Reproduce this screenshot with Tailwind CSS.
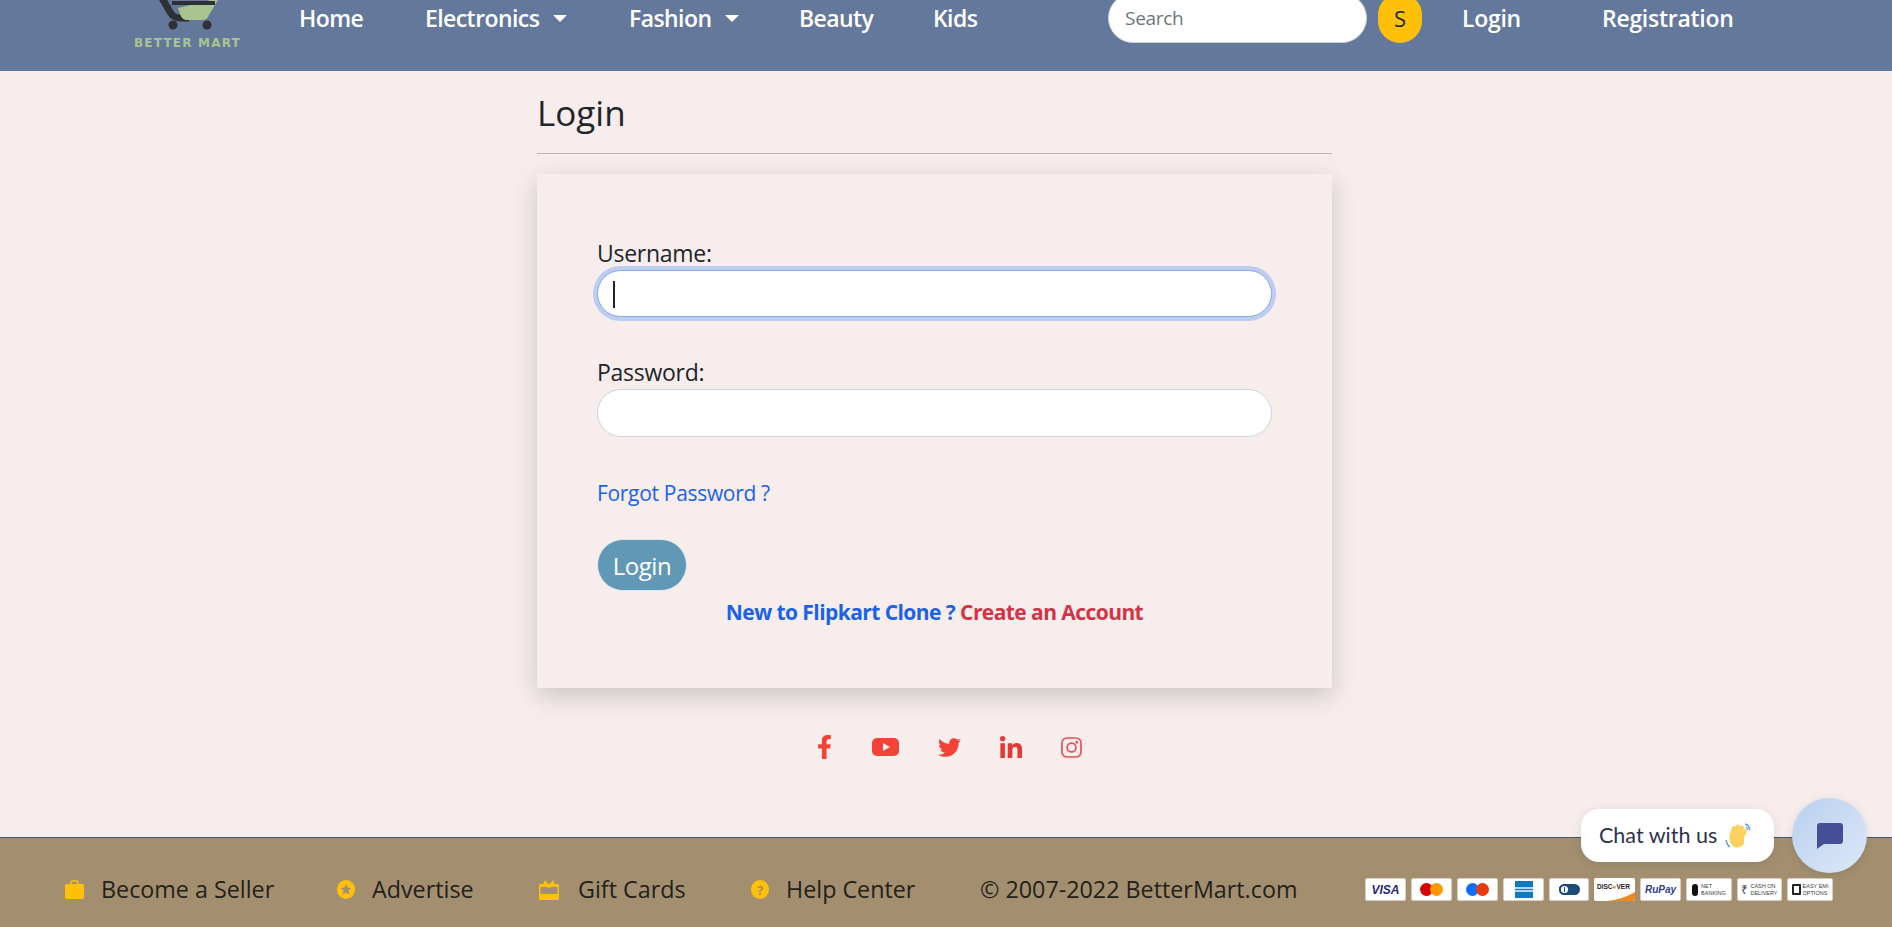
<!DOCTYPE html>
<html lang="en">
  <head>
    <meta charset="UTF-8" />
    <meta name="viewport" content="width=device-width, initial-scale=1.0" />
    <script src="https://cdn.jsdelivr.net/npm/@tailwindcss/browser@4"></script>
    <title>Login</title>
  </head>
  <body class="relative h-[927px] overflow-hidden bg-[#f7eded] font-['Open_Sans',sans-serif] text-[#212529]">
    <!-- page is scrolled a little, so the nav starts above the window -->
    <nav class="-mt-[12px] h-[83px] bg-[#64789b] text-white">
      <div class="flex h-[60px] items-center">
        <div class="ml-[134px] flex w-[165px] flex-col self-start pt-[12px]">
          <svg class="ml-[25px] h-[32px] w-[60px]" viewBox="0 0 60 32">
            <path d="M3 -2 L11 12 Q14 18 21 18 L30 18" fill="none" stroke="#2f3035" stroke-width="7" />
            <path d="M19 8 L60 -2 L50 15 Q48 20 44 20 L28 20 Q23 20 21 14 Z" fill="#a9c48f" />
            <path d="M13 3 L56 3" stroke="#2f3035" stroke-width="4" />
            <circle cx="14" cy="25" r="4.5" fill="#2f3035" />
            <circle cx="48" cy="25" r="4.5" fill="#2f3035" />
          </svg>
          <span class="mt-[4px] font-['DejaVu_Sans',sans-serif] text-[12px] leading-[14px] font-bold tracking-[0.1em] whitespace-nowrap text-[#a9c48f]">BETTER MART</span>
        </div>
        <div class="flex items-center text-[23px] font-semibold tracking-[-0.025em]">
          <a class="w-[126px]">Home</a>
          <a class="flex w-[204px] items-center">Electronics<span class="ml-[14px] border-x-[7px] border-t-[7px] border-x-transparent border-t-white"></span></a>
          <a class="flex w-[170px] items-center">Fashion<span class="ml-[14px] border-x-[7px] border-t-[7px] border-x-transparent border-t-white"></span></a>
          <a class="w-[134px]">Beauty</a>
          <a class="w-[175px]">Kids</a>
        </div>
        <div class="flex items-center">
          <input placeholder="Search" class="h-[50px] w-[259px] rounded-[25px] border border-[#ced4da] bg-white px-[16px] text-[19px] tracking-[-0.015em] placeholder:text-[#6c757d]" />
          <button class="ml-[11px] h-[50px] w-[44px] rounded-[22px] bg-[#ffc107] text-[22px] text-[#212529]">S</button>
        </div>
        <a class="ml-[40px] w-[140px] text-[23px] font-semibold tracking-[-0.012em]">Login</a>
        <a class="text-[23px] font-semibold tracking-[-0.012em]">Registration</a>
      </div>
    </nav>

    <main class="ml-[537px] w-[795px]">
      <h1 class="flex h-[83px] items-center border-b border-[#bdb4b4] pt-[3px] text-[35px] font-medium">Login</h1>

      <form class="mt-[20px] flex h-[514px] flex-col bg-[#f7eded] px-[60px] pt-[64px] shadow-[0_8px_24px_rgba(0,0,0,0.18)]">
        <label class="h-[32px] text-[23px] leading-[31px] font-medium tracking-[-0.012em]">Username:</label>
        <div class="h-[47px] w-[675px] rounded-[24px] border border-[#86a9e8] bg-white pt-[10px] pl-[15px] shadow-[0_0_0_4px_#bccdf0]">
          <div class="h-[27px] w-[2px] bg-[#212529]"></div>
        </div>
        <label class="mt-[40px] h-[32px] text-[23px] leading-[31px] font-medium tracking-[-0.012em]">Password:</label>
        <input type="password" class="h-[48px] w-[675px] rounded-[24px] border border-[#ced4da] bg-white" />
        <a class="mt-[41px] h-[30px] text-[21px] leading-[30px] tracking-[-0.015em] text-[#1a63e8]">Forgot Password ?</a>
        <button type="button" class="mt-[31px] h-[52px] w-[90px] rounded-[26px] border border-[#dfe7ec] bg-[#6198b6] pt-[2px] text-[24px] tracking-[-0.02em] text-white">Login</button>
        <p class="mt-[6px] text-center text-[21px] leading-[30px] font-bold tracking-[-0.027em] text-[#1a63e8]">New to Flipkart Clone ? <span class="text-[#d33445]">Create an Account</span></p>
      </form>

      <div class="mt-[47px] flex h-[24px] items-center text-[#f44336]">
        <svg class="ml-[280px] h-[24px] w-[15px]" viewBox="0 0 320 512" fill="currentColor"><path d="M279.14 288l14.22-92.66h-88.91v-60.13c0-25.35 12.42-50.06 52.24-50.06h40.42V6.26S260.43 0 225.36 0c-73.22 0-121.08 44.38-121.08 124.72v70.62H22.89V288h81.39v224h100.17V288z"/></svg>
        <svg class="ml-[40px] h-[18px] w-[27px]" viewBox="0 0 27 18"><rect width="27" height="18" rx="5" fill="currentColor"/><path d="M11 5 L18 9 L11 13 Z" fill="#f7eded"/></svg>
        <svg class="ml-[39px] h-[23px] w-[23px]" viewBox="0 0 512 512" fill="currentColor"><path d="M459.37 151.716c.325 4.548.325 9.097.325 13.645 0 138.72-105.583 298.558-298.558 298.558-59.452 0-114.68-17.219-161.137-47.106 8.447.974 16.568 1.299 25.34 1.299 49.055 0 94.213-16.568 130.274-44.832-46.132-.975-84.792-31.188-98.112-72.772 6.498.974 12.995 1.624 19.818 1.624 9.421 0 18.843-1.3 27.614-3.573-48.081-9.747-84.143-51.98-84.143-102.985v-1.299c13.969 7.797 30.214 12.67 47.431 13.319-28.264-18.843-46.781-51.005-46.781-87.391 0-19.492 5.197-37.36 14.294-52.954 51.655 63.675 129.3 105.258 216.365 109.807-1.624-7.797-2.599-15.918-2.599-24.04 0-57.828 46.782-104.934 104.934-104.934 30.213 0 57.502 12.67 76.67 33.137 23.715-4.548 46.456-13.32 66.599-25.34-7.798 24.366-24.366 44.833-46.132 57.827 21.117-2.273 41.584-8.122 60.426-16.243-14.292 20.791-32.161 39.308-52.628 54.253z"/></svg>
        <svg class="ml-[39px] h-[22px] w-[22px]" viewBox="0 0 448 448" fill="#e53935"><path d="M100.28 448H7.4V148.9h92.88zM53.79 108.1C24.09 108.1 0 83.5 0 53.8a53.79 53.79 0 0 1 107.58 0c0 29.7-24.1 54.3-53.79 54.3zM447.9 448h-92.68V302.4c0-34.7-.7-79.2-48.29-79.2-48.29 0-55.69 37.7-55.69 76.7V448h-92.78V148.9h89.08v40.8h1.3c12.4-23.5 42.69-48.3 87.88-48.3 94 0 111.28 61.9 111.28 142.3V448z"/></svg>
        <svg class="ml-[39px] h-[21px] w-[21px]" viewBox="0 0 21 21" fill="none" stroke="#e5525b" stroke-width="1.7"><rect x="1" y="1" width="19" height="19" rx="5"/><circle cx="10.5" cy="10.5" r="4.4"/><circle cx="15.8" cy="5.2" r="0.6" fill="#e5525b"/></svg>
      </div>
    </main>

    <footer class="absolute inset-x-0 top-[837px] h-[90px] border-t border-[#4a5568] bg-[#a38f70]">
      <div class="flex h-[103px] items-center pl-[65px] text-[23.3px] font-medium text-[#231f1a]">
        <div class="flex w-[272px] items-center gap-[17px]">
          <svg class="h-[19px] w-[19px]" viewBox="0 0 19 19"><path d="M6 5 V2.5 Q6 1 7.5 1 H11.5 Q13 1 13 2.5 V5" fill="none" stroke="#ffc107" stroke-width="1.5"/><rect y="4" width="19" height="15" rx="1.5" fill="#ffc107"/></svg>
          <span>Become a Seller</span>
        </div>
        <div class="flex w-[202px] items-center gap-[17px]">
          <svg class="h-[19px] w-[18px]" viewBox="0 0 18 19"><ellipse cx="9" cy="9.5" rx="9" ry="9.5" fill="#ffc107"/><path d="M9 4 L10.6 7.6 L14.4 8 L11.5 10.5 L12.4 14.4 L9 12.4 L5.6 14.4 L6.5 10.5 L3.6 8 L7.4 7.6 Z" fill="#a38f70"/></svg>
          <span>Advertise</span>
        </div>
        <div class="flex w-[212px] items-center gap-[19px]">
          <svg class="h-[20px] w-[20px]" viewBox="0 0 20 20"><rect y="4" width="20" height="16" rx="1.5" fill="#ffc107"/><path d="M1.5 7 H18.5 V14 H1.5 Z" fill="#a38f70"/><path d="M6 0 L10 5 L14 0 L16 5 L10 8 L4 5 Z" fill="#ffc107"/></svg>
          <span>Gift Cards</span>
        </div>
        <div class="flex w-[229px] items-center gap-[17px]">
          <svg class="h-[19px] w-[18px]" viewBox="0 0 18 19"><ellipse cx="9" cy="9.5" rx="9" ry="9.5" fill="#ffc107"/><text x="9" y="14.5" text-anchor="middle" font-size="13" font-weight="700" fill="#a38f70">?</text></svg>
          <span>Help Center</span>
        </div>
        <span class="w-[385px]">© 2007-2022 BetterMart.com</span>
        <div class="flex h-[23px] gap-[5px] font-['Liberation_Sans',sans-serif] font-normal text-[#3b3b3b]">
          <div class="flex w-[41px] items-center justify-center rounded-[2px] border border-[#d9cfc0] bg-white text-[12px] font-bold italic text-[#1f2a78]">VISA</div>
          <div class="flex w-[41px] items-center justify-center rounded-[2px] border border-[#d9cfc0] bg-white">
            <span class="h-[13px] w-[13px] rounded-full bg-[#d50000]"></span><span class="-ml-[3px] h-[13px] w-[13px] rounded-full bg-[#ff9800]"></span>
          </div>
          <div class="flex w-[41px] items-center justify-center rounded-[2px] border border-[#d9cfc0] bg-white">
            <span class="h-[13px] w-[13px] rounded-full bg-[#0d6efd]"></span><span class="-ml-[3px] h-[13px] w-[13px] rounded-full bg-[#e8380d]"></span>
          </div>
          <div class="flex w-[41px] items-center justify-center rounded-[2px] border border-[#d9cfc0] bg-white">
            <div class="flex h-[17px] w-[18px] flex-col justify-center gap-[1px] bg-[#0f7ac0]"><span class="h-[2px] bg-white/70"></span><span class="h-[2px] bg-white/70"></span></div>
          </div>
          <div class="flex w-[40px] items-center justify-center rounded-[2px] border border-[#d9cfc0] bg-white">
            <div class="flex h-[11px] w-[21px] items-center rounded-[6px] bg-[#1d4c78]"><span class="flex h-[11px] w-[11px] items-center justify-center rounded-full border-[2px] border-[#1d4c78] bg-white"><span class="h-[5px] w-[1px] bg-[#1d4c78]"></span></span></div>
          </div>
          <div class="relative flex w-[41px] overflow-hidden rounded-[2px] bg-white pt-[5px] pl-[3px] text-[6.5px] leading-[7px] font-bold whitespace-nowrap text-[#222]">
            <span>DISC<span class="text-[#f08a1d]">●</span>VER</span>
            <svg class="absolute right-0 bottom-0 h-[9px] w-[28px]" viewBox="0 0 28 9"><path d="M0 9 Q14 8 28 0 V9 Z" fill="#f08a1d"/></svg>
          </div>
          <div class="flex w-[41px] items-center justify-center rounded-[2px] border border-[#d9cfc0] bg-white text-[10px] font-bold italic text-[#2f3a8f]">RuPay</div>
          <div class="flex w-[46px] items-center justify-center gap-[3px] rounded-[2px] border border-[#d9cfc0] bg-white text-[5.5px] leading-[7px]">
            <span class="h-[12px] w-[6px] rounded-[3px] bg-[#111]"></span><span>NET<br />BANKING</span>
          </div>
          <div class="flex w-[45px] items-center justify-center gap-[2px] rounded-[2px] border border-[#d9cfc0] bg-white text-[5.5px] leading-[7px]">
            <span class="text-[12px] leading-none">₹</span><span>CASH ON<br />DELIVERY</span>
          </div>
          <div class="flex w-[46px] items-center justify-center gap-[2px] rounded-[2px] border border-[#d9cfc0] bg-white text-[5.5px] leading-[7px]">
            <span class="h-[11px] w-[9px] shrink-0 rounded-[1px] border-[2px] border-[#222]"></span><span>EASY EMI<br />OPTIONS</span>
          </div>
        </div>
      </div>
    </footer>

    <!-- chat widget floats over the footer -->
    <div class="absolute top-[809px] left-[1581px] flex h-[53px] w-[193px] items-center rounded-[18px] bg-white pl-[18px] font-['Lato',sans-serif] text-[21.5px] whitespace-nowrap text-[#2c3350] shadow-[0_2px_12px_rgba(0,0,0,0.1)]">
      Chat with us
      <svg class="ml-[8px] h-[26px] w-[26px] shrink-0" viewBox="0 0 26 26">
        <g stroke="#fcd15b" stroke-width="4" stroke-linecap="round" fill="none">
          <path d="M7 11 L9 5" /><path d="M10 11 L13 3.5" /><path d="M14 12 L17 4.5" /><path d="M17 14 L20 8" />
        </g>
        <path d="M5 10 L18 11 Q21 20 17 23 Q12 26 8 23 Q3 19 5 10 Z" fill="#fcd15b" />
        <path d="M20 1 Q24 2 25 7 M21 4 Q22.5 5 23 7 M1 17 Q2 22 5 24" fill="none" stroke="#5a9bd5" stroke-width="1.3" />
      </svg>
    </div>
    <div class="absolute top-[798px] left-[1792px] flex h-[75px] w-[75px] items-center justify-center rounded-full bg-linear-to-br from-[#b9d0ee] to-[#dce8f8] shadow-[0_2px_10px_rgba(0,0,0,0.1)]">
      <svg class="h-[26px] w-[26px]" viewBox="0 0 26 26"><path d="M3 0 H23 Q26 0 26 3 V18 Q26 21 23 21 H7 L0 26 V3 Q0 0 3 0 Z" fill="#454f96"/></svg>
    </div>
  </body>
</html>
